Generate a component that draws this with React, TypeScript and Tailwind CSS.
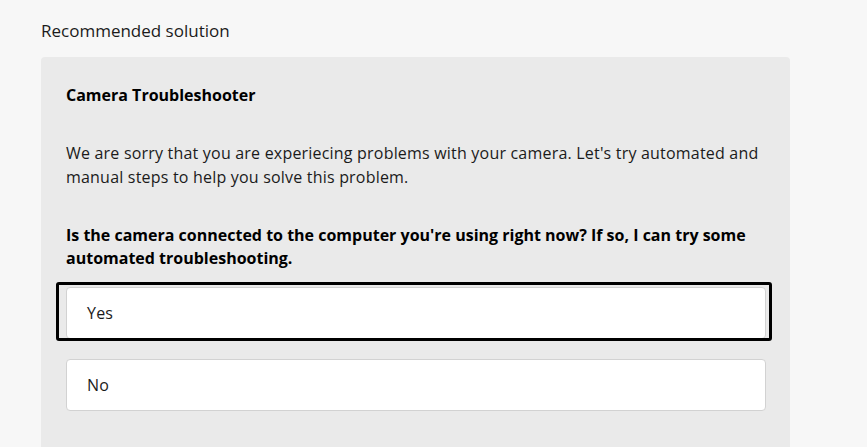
import React from 'react';

const font = { fontFamily: '"Open Sans", "Noto Sans", Arial, sans-serif' };

function Choice({ label, focused }: { label: string; focused?: boolean }) {
  return (
    <div className="relative">
      {focused && (
        <div className="pointer-events-none absolute -top-[5px] -bottom-[2px] -left-[10px] -right-[6px] rounded-[3px] border-[3px] border-black" />
      )}
      <button className="flex h-[52px] w-full items-center rounded-[4px] border border-[#d2d2d2] bg-white pl-5 text-left text-[16px] tracking-[0.2px] text-[#1b1b1b]">
        {label}
      </button>
    </div>
  );
}

export default function App() {
  return (
    <div className="min-h-screen w-full bg-[#f7f7f7] pl-[41px] pt-[19px]" style={font}>
      <h2 className="text-[17px] leading-6 text-[#1b1b1b]">Recommended solution</h2>

      <section className="mt-[14px] w-[749px] rounded-[4px] bg-[#eaeaea] pb-10 pl-[25px] pr-[24px] pt-[26px] text-[#1b1b1b]">
        <h3 className="text-[16px] font-bold leading-6 text-black">Camera Troubleshooter</h3>

        <p className="mt-[34px] text-[16px] leading-6 tracking-[0.2px]">
          We are sorry that you are experiecing problems with your camera. Let's try automated and
          <br />
          manual steps to help you solve this problem.
        </p>

        <p className="mt-[35px] text-[16px] font-bold leading-[23px] text-black">
          Is the camera connected to the computer you're using right now? If so, I can try some
          <br />
          automated troubleshooting.
        </p>

        <div className="mt-[17px] flex flex-col gap-5">
          <Choice label="Yes" focused />
          <Choice label="No" />
        </div>
      </section>
    </div>
  );
}
